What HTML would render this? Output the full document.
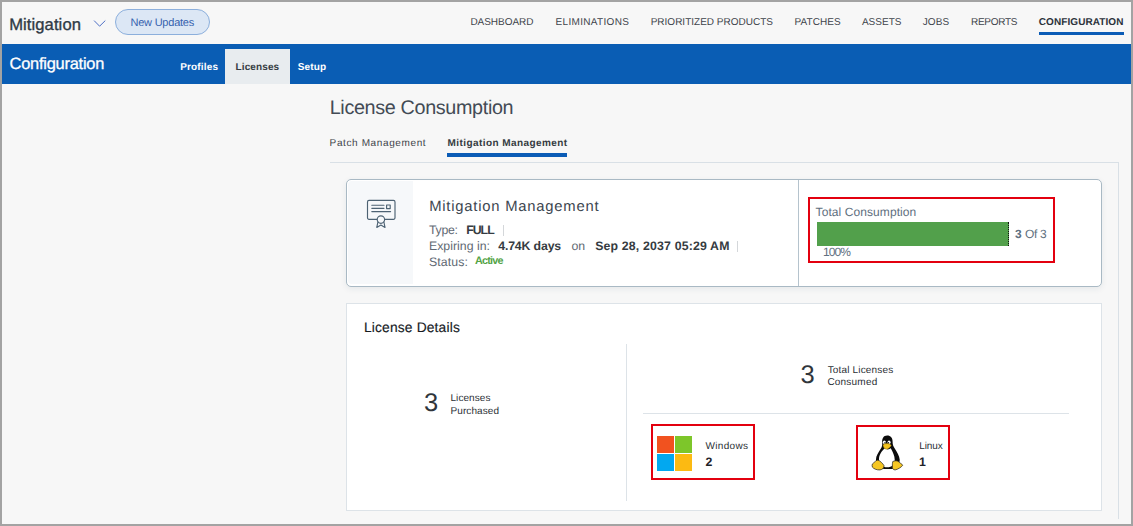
<!DOCTYPE html>
<html><head><meta charset="utf-8">
<style>
*{margin:0;padding:0;box-sizing:border-box}
html,body{width:1133px;height:526px;overflow:hidden}
body{position:relative;background:#a3a3a3;font-family:"Liberation Sans",sans-serif}
.a{position:absolute;white-space:nowrap;line-height:1;text-rendering:geometricPrecision}
.s{position:absolute}
</style></head><body>
<div class="s" style="left:2px;top:2px;width:1129px;height:522px;background:#f7f7f7"></div>
<svg class="s" style="left:85px;top:10px" width="30" height="30"><polyline points="94.1,20.6 99.6,26.2 105.3,20.6" transform="translate(-85,-10)" fill="none" stroke="#4467c2" stroke-width="0.95"/></svg>
<div class="s" style="left:115px;top:9px;width:95px;height:26px;border:1px solid #8cafdc;border-radius:13px;background:#dce7f5"></div>
<div class="s" style="left:1039px;top:32px;width:85px;height:3px;background:#0b5cb6"></div>
<div class="s" style="left:2px;top:44px;width:1129px;height:40px;background:#0a5db4"></div>
<div class="s" style="left:225px;top:49px;width:65px;height:35px;background:#e8ecef"></div>
<div class="s" style="left:447px;top:153px;width:120px;height:4px;background:#0b5cb6"></div>
<div class="s" style="left:330px;top:162px;width:789px;height:1px;background:#d9e0e6"></div>
<div class="s" style="left:1118px;top:162px;width:1px;height:357px;background:#d9e0e6"></div>
<!-- card -->
<div class="s" style="left:346px;top:179px;width:756px;height:108px;border:1px solid #a9b9c4;border-radius:5px;background:#fff;box-shadow:0 2px 6px rgba(30,60,90,0.08)"></div>
<div class="s" style="left:348px;top:181px;width:65px;height:103px;background:#f6f8fa;border-radius:4px 0 0 4px"></div>
<div class="s" style="left:798px;top:180px;width:1px;height:106px;background:#b5c3cd"></div>
<svg class="s" style="left:360px;top:192px" width="40" height="40" viewBox="360 192 40 40">
<g fill="none" stroke="#4d6273" stroke-width="1.15" stroke-linecap="round" stroke-linejoin="round">
<path d="M376.9,219.3 H369 a1.5,1.5 0 0 1 -1.5,-1.5 V201.9 a1.5,1.5 0 0 1 1.5,-1.5 H393.5 a1.5,1.5 0 0 1 1.5,1.5 V217.8 a1.5,1.5 0 0 1 -1.5,1.5 H384.9"/>
<path d="M371.8,205.2 H384 M371.8,208.3 H384 M371.8,211.6 H390.6"/>
<rect x="386.6" y="205" width="3.6" height="3.6"/>
<circle cx="380.9" cy="219.6" r="3.7"/>
<path d="M377.9,222 L376.8,227.4 L380.9,225 L385,227.4 L383.9,222"/>
</g></svg>
<!-- red box consumption -->
<div class="s" style="left:808px;top:197px;width:247px;height:66px;border:2px solid #e3000f"></div>
<div class="s" style="left:817px;top:222px;width:192px;height:24px;background:#52a04b"></div>
<div class="s" style="left:1008px;top:222px;width:1px;height:24px;border-left:1px dotted #111"></div>
<!-- details -->
<div class="s" style="left:346px;top:303px;width:756px;height:208px;border:1px solid #dde3e8;background:#fff"></div>
<div class="s" style="left:626px;top:344px;width:1px;height:157px;background:#dde3e8"></div>
<div class="s" style="left:643px;top:413px;width:426px;height:1px;background:#dde3e8"></div>
<div class="s" style="left:651px;top:424px;width:104px;height:56px;border:2px solid #e3000f"></div>
<div class="s" style="left:856px;top:425px;width:94px;height:55px;border:2px solid #e3000f"></div>
<div class="s" style="left:657px;top:436px;width:17px;height:17px;background:#f1521f"></div>
<div class="s" style="left:675px;top:436px;width:17px;height:17px;background:#7dc62a"></div>
<div class="s" style="left:657px;top:454px;width:17px;height:17px;background:#02a8f0"></div>
<div class="s" style="left:675px;top:454px;width:17px;height:17px;background:#fcba12"></div>
<svg class="s" style="left:868px;top:432px" width="40" height="42" viewBox="0 0 501 526">
<path d="M240,45 C195,45 175,80 178,130 C180,165 175,185 160,210 C130,255 100,300 100,345 C100,400 150,455 200,462 L300,462 C360,452 400,400 397,345 C394,300 362,250 337,210 C317,180 308,160 308,120 C308,75 285,45 240,45 Z" fill="#0b0b0b"/>
<path d="M212,205 C172,235 135,290 138,350 C141,410 178,442 240,442 C300,442 335,410 335,350 C335,300 310,250 285,205 C265,222 232,222 212,205 Z" fill="#fff"/>
<ellipse cx="205" cy="128" rx="19" ry="23" fill="#fff"/><ellipse cx="264" cy="128" rx="19" ry="23" fill="#fff"/>
<ellipse cx="213" cy="136" rx="9" ry="11" fill="#111"/><ellipse cx="256" cy="136" rx="9" ry="11" fill="#111"/>
<path d="M188,160 C210,138 272,140 292,165 C282,192 252,215 225,215 C203,205 188,185 188,160 Z" fill="#f3c31f" stroke="#7a5c00" stroke-width="5"/>
<path d="M55,400 C80,380 105,350 125,350 C150,360 185,395 200,420 C205,450 180,470 150,475 C110,478 70,460 55,440 C50,425 50,410 55,400 Z" fill="#f5c623" stroke="#222" stroke-width="9"/>
<path d="M310,370 C330,360 365,355 380,370 C400,390 425,400 435,415 C420,440 380,465 340,475 C315,475 300,455 305,430 C305,410 305,385 310,370 Z" fill="#f5c623" stroke="#222" stroke-width="9"/>
</svg>
<div class="s" style="left:503px;top:225px;width:1px;height:11px;background:#d4d7da"></div>
<div class="s" style="left:737px;top:241px;width:1px;height:11px;background:#d4d7da"></div>
<div class="a" style="left:9.20px;top:17px;font-size:16.6px;color:#2f3a45;letter-spacing:0.08px;-webkit-text-stroke:0.35px #2f3a45;">Mitigation</div>
<div class="a" style="left:130.50px;top:18px;font-size:11px;color:#3562ae;letter-spacing:-0.23px;">New Updates</div>
<div class="a" style="left:470.40px;top:18px;font-size:10px;color:#3e444b;letter-spacing:-0.04px;">DASHBOARD</div>
<div class="a" style="left:555.50px;top:18px;font-size:10px;color:#3e444b;letter-spacing:0.33px;">ELIMINATIONS</div>
<div class="a" style="left:650.70px;top:18px;font-size:10px;color:#3e444b;">PRIORITIZED PRODUCTS</div>
<div class="a" style="left:794.60px;top:18px;font-size:10px;color:#3e444b;letter-spacing:0.06px;">PATCHES</div>
<div class="a" style="left:861.90px;top:18px;font-size:10px;color:#3e444b;letter-spacing:0.03px;">ASSETS</div>
<div class="a" style="left:922.70px;top:18px;font-size:10px;color:#3e444b;letter-spacing:0.12px;">JOBS</div>
<div class="a" style="left:971.00px;top:18px;font-size:10px;color:#3e444b;letter-spacing:-0.29px;">REPORTS</div>
<div class="a" style="left:1038.80px;top:18px;font-size:10px;color:#2b323a;font-weight:bold;letter-spacing:0.08px;">CONFIGURATION</div>
<div class="a" style="left:9.60px;top:56px;font-size:16.4px;color:#ffffff;letter-spacing:-0.23px;-webkit-text-stroke:0.3px #fff;">Configuration</div>
<div class="a" style="left:180.20px;top:63px;font-size:10px;color:#ffffff;font-weight:bold;letter-spacing:0.16px;">Profiles</div>
<div class="a" style="left:235.60px;top:63px;font-size:10px;color:#363c42;font-weight:bold;letter-spacing:0.11px;">Licenses</div>
<div class="a" style="left:297.80px;top:63px;font-size:10px;color:#ffffff;font-weight:bold;letter-spacing:0.11px;">Setup</div>
<div class="a" style="left:329.70px;top:99px;font-size:19.8px;color:#434b55;letter-spacing:-0.35px;">License Consumption</div>
<div class="a" style="left:329.60px;top:139px;font-size:10px;color:#3d4349;letter-spacing:0.62px;">Patch Management</div>
<div class="a" style="left:447.60px;top:139px;font-size:10px;color:#343a40;font-weight:bold;letter-spacing:0.42px;">Mitigation Management</div>
<div class="a" style="left:429.20px;top:200px;font-size:14.8px;color:#3d4650;letter-spacing:0.78px;">Mitigation Management</div>
<div class="a" style="left:429.00px;top:224px;font-size:12.3px;color:#5f6973;letter-spacing:-0.27px;">Type:</div>
<div class="a" style="left:466.20px;top:224px;font-size:12.3px;color:#353b41;font-weight:bold;letter-spacing:-0.98px;">FULL</div>
<div class="a" style="left:429.00px;top:240px;font-size:12.3px;color:#5f6973;letter-spacing:0.01px;">Expiring in:</div>
<div class="a" style="left:498.20px;top:240px;font-size:12.3px;color:#353b41;font-weight:bold;letter-spacing:-0.14px;">4.74K days</div>
<div class="a" style="left:571.50px;top:240px;font-size:12.3px;color:#5f6973;letter-spacing:-0.18px;">on</div>
<div class="a" style="left:595.20px;top:240px;font-size:12.3px;color:#353b41;font-weight:bold;letter-spacing:0.17px;">Sep 28, 2037 05:29 AM</div>
<div class="a" style="left:429.00px;top:256px;font-size:12.3px;color:#5f6973;letter-spacing:0.12px;">Status:</div>
<div class="a" style="left:475.00px;top:256px;font-size:10.8px;color:#54a447;font-weight:bold;letter-spacing:-0.79px;">Active</div>
<div class="a" style="left:815.60px;top:206px;font-size:12px;color:#5f7080;letter-spacing:0.08px;">Total Consumption</div>
<div class="a" style="left:822.90px;top:246px;font-size:12px;color:#607080;letter-spacing:-0.90px;">100%</div>
<div class="a" style="left:1015.10px;top:228px;font-size:12px;color:#607080;font-weight:bold;">3</div>
<div class="a" style="left:1025.00px;top:228px;font-size:12px;color:#607080;letter-spacing:-0.36px;">Of 3</div>
<div class="a" style="left:364.00px;top:321px;font-size:13.8px;color:#171b1f;letter-spacing:0.16px;-webkit-text-stroke:0.15px #171b1f;">License Details</div>
<div class="a" style="left:423.90px;top:391px;font-size:25.5px;color:#2f353b;">3</div>
<div class="a" style="left:450.50px;top:394px;font-size:10px;color:#2b3035;letter-spacing:0.06px;">Licenses</div>
<div class="a" style="left:450.50px;top:407px;font-size:10px;color:#2b3035;letter-spacing:0.09px;">Purchased</div>
<div class="a" style="left:800.60px;top:363px;font-size:25.5px;color:#2f353b;">3</div>
<div class="a" style="left:827.70px;top:366px;font-size:10px;color:#2b3035;letter-spacing:0.16px;">Total Licenses</div>
<div class="a" style="left:827.40px;top:378px;font-size:10px;color:#2b3035;letter-spacing:0.21px;">Consumed</div>
<div class="a" style="left:705.60px;top:442px;font-size:10px;color:#2b3035;letter-spacing:0.29px;">Windows</div>
<div class="a" style="left:705.60px;top:456px;font-size:12.3px;color:#1e2328;font-weight:bold;">2</div>
<div class="a" style="left:919.20px;top:442px;font-size:10px;color:#2b3035;letter-spacing:-0.10px;">Linux</div>
<div class="a" style="left:919.00px;top:456px;font-size:12.3px;color:#1e2328;font-weight:bold;">1</div>
</body></html>
